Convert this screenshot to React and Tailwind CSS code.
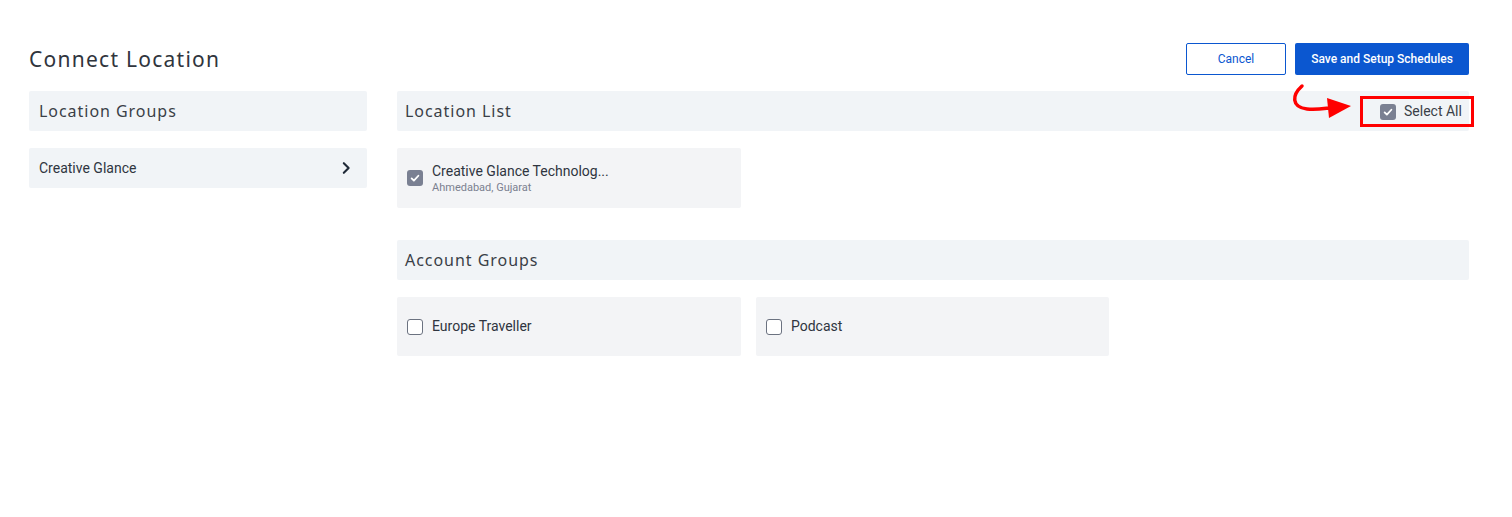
import React from "react";

const Checked = () => (
  <span className="flex h-4 w-4 shrink-0 items-center justify-center rounded-[3px] bg-[#7a8092]">
    <svg viewBox="0 0 16 16" className="h-3 w-3" fill="none" stroke="white" strokeWidth="2.4" strokeLinecap="round" strokeLinejoin="round">
      <path d="M3.5 8.5l3 3 6-6.5" />
    </svg>
  </span>
);

const Unchecked = () => (
  <span className="block h-4 w-4 shrink-0 rounded-[3px] border border-[#6b7280] bg-white" />
);

const Heading = ({ children, extra = "", pad = "px-[10px]" }) => (
  <div className={`flex h-10 items-center rounded-[2px] bg-[#f1f4f7] ${pad} ${extra}`}>
    <span className="font-['Noto_Sans',sans-serif] text-[16px] tracking-[0.06em] text-[#3a3f47]">{children}</span>
  </div>
);

export default function App() {
  return (
    <div className="min-h-[517px] w-[1512px] bg-white font-['Roboto',sans-serif]">
      <div className="flex items-start justify-between pl-[29px] pr-[43px] pt-[43px]">
        <h1 className="mt-[1px] font-['Noto_Sans',sans-serif] text-[21px] leading-[30px] tracking-[0.06em] text-[#30353d]">Connect Location</h1>
        <div className="flex gap-[9px]">
          <button className="h-8 w-[100px] rounded-[2px] border border-[#0b57d0] bg-white text-[12px] text-[#0b57d0]">Cancel</button>
          <button className="h-8 w-[174px] rounded-[2px] bg-[#0b57d0] text-[12px] font-medium text-white">Save and Setup Schedules</button>
        </div>
      </div>

      <div className="mt-4 flex gap-[30px] pl-[29px] pr-[43px]">
        <div className="flex w-[338px] flex-col gap-[17px]">
          <Heading>Location Groups</Heading>
          <div className="flex h-10 items-center justify-between rounded-[2px] bg-[#f1f4f7] pl-[10px] pr-[14px]">
            <span className="text-[14px] text-[#2f3540]">Creative Glance</span>
            <svg viewBox="0 0 16 16" className="h-[14px] w-[14px]" fill="none" stroke="#1f2937" strokeWidth="2.4" strokeLinecap="round" strokeLinejoin="round">
              <path d="M5.5 2.5L11 8l-5.5 5.5" />
            </svg>
          </div>
        </div>

        <div className="flex flex-1 flex-col">
          <div className="relative">
            <Heading pad="px-[8px]">Location List</Heading>
            <div className="absolute right-[-5px] top-[5px] flex h-[31px] w-[114px] items-center gap-[8px] border-[3px] border-[#ff0000] pl-[17px]">
              <Checked />
              <span className="text-[14px] text-[#3a3f47]">Select All</span>
            </div>
            <svg className="absolute left-[892px] top-[-8px] h-[44px] w-[66px]" viewBox="0 0 66 44" fill="none">
              <path d="M13 3 C 3 12, 2 24, 18 26 C 26 27, 32 26, 40 25" stroke="#ff0000" strokeWidth="3.5" strokeLinecap="round" />
              <path d="M38 15 L62 23 L40 35 Z" fill="#ff0000" />
            </svg>
          </div>

          <div className="mt-[17px] flex h-[60px] w-[344px] items-center gap-[9px] rounded-[2px] bg-[#f3f4f6] pl-[10px]">
            <Checked />
            <div className="flex flex-col">
              <span className="text-[14px] leading-[18px] text-[#2f3540]">Creative Glance Technolog...</span>
              <span className="text-[11px] leading-[15px] text-[#7b8190]">Ahmedabad, Gujarat</span>
            </div>
          </div>

          <Heading extra="mt-8" pad="px-[8px]">Account Groups</Heading>

          <div className="mt-[17px] flex gap-[15px]">
            <div className="flex h-[59px] w-[344px] items-center gap-[9px] rounded-[2px] bg-[#f3f4f6] pl-[10px]">
              <Unchecked />
              <span className="text-[14px] text-[#2f3540]">Europe Traveller</span>
            </div>
            <div className="flex h-[59px] w-[353px] items-center gap-[9px] rounded-[2px] bg-[#f3f4f6] pl-[10px]">
              <Unchecked />
              <span className="text-[14px] text-[#2f3540]">Podcast</span>
            </div>
          </div>
        </div>
      </div>
    </div>
  );
}
